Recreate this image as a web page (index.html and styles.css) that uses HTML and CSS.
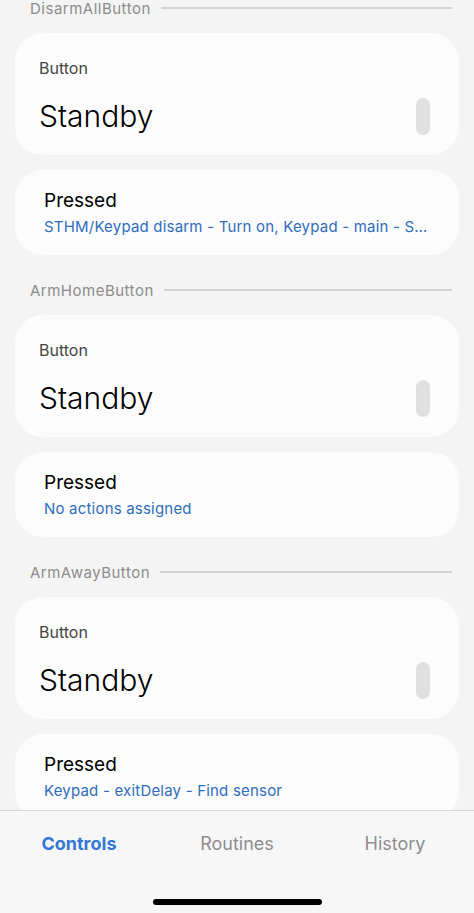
FILE: index.html
```html
<!DOCTYPE html>
<html lang="en">
<head>
    <meta charset="UTF-8">
    <meta name="viewport" content="width=device-width, initial-scale=1.0">
    <title>Keypad</title>
    <link rel="stylesheet" href="styles.css">
</head>
<body>
    <div class="app">
        <main class="content">
            <div class="section-title"><span>DisarmAllButton</span></div>
            <div class="card state-card">
                <div class="card-label">Button</div>
                <div class="state-row">
                    <span class="state-value">Standby</span>
                    <div class="state-pill"></div>
                </div>
            </div>
            <div class="card action-card">
                <div class="action-title">Pressed</div>
                <div class="action-link">STHM/Keypad disarm - Turn on, Keypad - main - Scene on, Lights off</div>
            </div>

            <div class="section-title"><span>ArmHomeButton</span></div>
            <div class="card state-card">
                <div class="card-label">Button</div>
                <div class="state-row">
                    <span class="state-value">Standby</span>
                    <div class="state-pill"></div>
                </div>
            </div>
            <div class="card action-card">
                <div class="action-title">Pressed</div>
                <div class="action-link">No actions assigned</div>
            </div>

            <div class="section-title"><span>ArmAwayButton</span></div>
            <div class="card state-card">
                <div class="card-label">Button</div>
                <div class="state-row">
                    <span class="state-value">Standby</span>
                    <div class="state-pill"></div>
                </div>
            </div>
            <div class="card action-card">
                <div class="action-title">Pressed</div>
                <div class="action-link">Keypad - exitDelay - Find sensor</div>
            </div>
        </main>

        <nav class="tab-bar">
            <div class="tabs">
                <div class="tab tab-active">Controls</div>
                <div class="tab">Routines</div>
                <div class="tab">History</div>
            </div>
            <div class="home-indicator"></div>
        </nav>
    </div>
</body>
</html>
```

FILE: styles.css
```css
* {
    margin: 0;
    padding: 0;
    box-sizing: border-box;
}

body {
    background: #f4f4f4;
    font-family: Inter, "Noto Sans", sans-serif;
    color: #000;
}

.app {
    height: 913px;
    display: flex;
    flex-direction: column;
    overflow: hidden;
}

/* list is scrolled a little, so the first header sits at the very top */
.content {
    flex: 1;
    overflow: hidden;
    padding: 0 15px;
    margin-top: -27px;
}

.section-title {
    display: flex;
    align-items: center;
    gap: 10px;
    height: 20px;
    margin: 25px 7px 15px 15px;
    font-size: 15px;
    letter-spacing: 0.5px;
    color: #8c8c8c;
}

.section-title::after {
    content: "";
    flex: 1;
    height: 2px;
    background: #d2d2d2;
}

.card {
    background: #fcfcfc;
    border-radius: 28px;
    margin-bottom: 15px;
}

.state-card {
    padding: 24px 29px 20px 24px;
}

.card-label {
    font-size: 16px;
    line-height: 22px;
    color: #444;
}

.state-row {
    display: flex;
    align-items: center;
    justify-content: space-between;
    margin-top: 18px;
    height: 38px;
}

.state-value {
    font-size: 30px;
    line-height: 38px;
    font-weight: 300;
}

.state-pill {
    width: 14px;
    height: 37px;
    border-radius: 7px;
    background: #e0e0e0;
}

.action-card {
    padding: 19px 29px 18px 29px;
}

.action-title {
    font-size: 19px;
    line-height: 24px;
}

.action-link {
    margin-top: 4px;
    font-size: 15px;
    line-height: 20px;
    letter-spacing: 0.2px;
    color: #2f6dbd;
    white-space: nowrap;
    overflow: hidden;
    text-overflow: ellipsis;
}

.tab-bar {
    height: 103px;
    background: #f7f7f7;
    border-top: 1px solid #d6d6d6;
    display: flex;
    flex-direction: column;
    align-items: center;
}

.tabs {
    width: 100%;
    display: grid;
    grid-template-columns: repeat(3, 1fr);
    margin-top: 21px;
}

.tab {
    text-align: center;
    font-size: 18px;
    line-height: 24px;
    color: #8e8e8e;
}

.tab-active {
    color: #3377d6;
    font-weight: bold;
}

.home-indicator {
    width: 169px;
    height: 6px;
    border-radius: 3px;
    background: #000;
    margin-top: 43px;
}
```
